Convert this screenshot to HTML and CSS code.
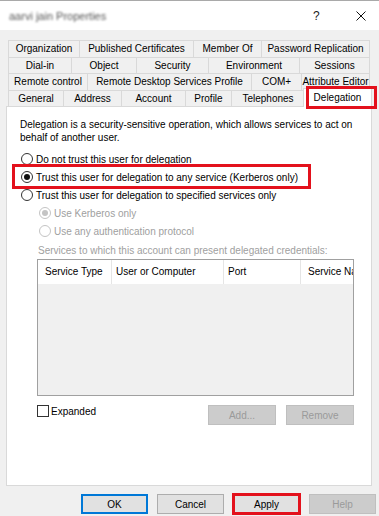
FILE: index.html
```html
<!DOCTYPE html>
<html lang="en">
<head>
  <meta charset="UTF-8" />
  <title>aarvi jain Properties</title>
  <link rel="stylesheet" href="styles.css">
</head>
<body>
  <div class="window">
    <div class="titlebar">
      <span class="title">aarvi jain Properties</span>
      <span class="help-btn">?</span>
      <span class="close-btn">
        <svg width="10" height="10" viewBox="0 0 10 10"><path d="M0.5 0.5L9.5 9.5M9.5 0.5L0.5 9.5" stroke="#111" stroke-width="1" fill="none"/></svg>
      </span>
    </div>

    <div class="content">
      <!-- tab strip, four rows -->
      <div class="tabs">
        <div class="tab-row row-1">
          <div class="tab">Organization</div>
          <div class="tab">Published Certificates</div>
          <div class="tab">Member Of</div>
          <div class="tab">Password Replication</div>
        </div>
        <div class="tab-row row-2">
          <div class="tab">Dial-in</div>
          <div class="tab">Object</div>
          <div class="tab">Security</div>
          <div class="tab">Environment</div>
          <div class="tab">Sessions</div>
        </div>
        <div class="tab-row row-3">
          <div class="tab">Remote control</div>
          <div class="tab">Remote Desktop Services Profile</div>
          <div class="tab">COM+</div>
          <div class="tab">Attribute Editor</div>
        </div>
        <div class="tab-row row-4">
          <div class="tab">General</div>
          <div class="tab">Address</div>
          <div class="tab">Account</div>
          <div class="tab">Profile</div>
          <div class="tab">Telephones</div>
          <div class="tab selected">Delegation</div>
        </div>
      </div>

      <div class="panel">
        <p class="intro">Delegation is a security-sensitive operation, which allows services to act on behalf of another user.</p>

        <div class="options">
          <div class="radio"><span class="dot"></span>Do not trust this user for delegation</div>
          <div class="radio checked marked"><span class="dot"></span>Trust this user for delegation to any service (Kerberos only)</div>
          <div class="radio"><span class="dot"></span>Trust this user for delegation to specified services only</div>
          <div class="radio sub disabled checked"><span class="dot"></span>Use Kerberos only</div>
          <div class="radio sub disabled"><span class="dot"></span>Use any authentication protocol</div>
        </div>

        <div class="services-label">Services to which this account can present delegated credentials:</div>

        <div class="listview">
          <div class="list-head">
            <div class="col col-type">Service Type</div>
            <div class="col col-user">User or Computer</div>
            <div class="col col-port">Port</div>
            <div class="col col-name">Service Na</div>
          </div>
          <div class="list-body"></div>
        </div>

        <div class="list-actions">
          <div class="check"><span class="box"></span>Expanded</div>
          <div class="action-buttons">
            <button class="btn disabled">Add...</button>
            <button class="btn disabled">Remove</button>
          </div>
        </div>
      </div>

      <div class="dialog-buttons">
        <button class="btn default">OK</button>
        <button class="btn">Cancel</button>
        <button class="btn marked-btn">Apply</button>
        <button class="btn disabled">Help</button>
      </div>
    </div>
  </div>
</body>
</html>
```

FILE: styles.css
```css
* {
  box-sizing: border-box;
}
body {
  margin: 0;
  font-family: "Liberation Sans", Arial, sans-serif;
  font-size: 10px;
  color: #000;
  background: #f0f0f0;
}
.window {
  width: 379px;
  height: 516px;
  display: flex;
  flex-direction: column;
  border-top: 1px solid #a9a9a9;
  overflow: hidden;
}
.titlebar {
  height: 29px;
  background: #fff;
  display: flex;
  align-items: center;
  padding: 0 0 0 9px;
}
.title {
  font-size: 11px;
  color: #555;
  filter: blur(1.3px);
  flex: 1;
}
.help-btn {
  font-size: 12px;
  color: #222;
  width: 12px;
  margin-right: 31px;
}
.close-btn {
  width: 10px;
  height: 10px;
  margin-right: 13px;
  display: flex;
}
.content {
  flex: 1;
  padding: 0 7px 0 6px;
  display: flex;
  flex-direction: column;
}
.tabs {
  margin: 10px 2px 0 2px;
}
.tab-row {
  display: grid;
  height: 17px;
}
.tab-row.row-2,
.tab-row.row-4 {
  height: 16px;
}
.row-1 { grid-template-columns: 72px 114px 68px 108px; }
.row-2 { grid-template-columns: 64px 65px 72px 91px 70px; }
.row-3 { grid-template-columns: 80px 164px 50px 68px; }
.row-4 { grid-template-columns: 56px 58px 64px 46px 73px 65px; }
.tab {
  border-top: 1px solid #d9d9d9;
  border-right: 1px solid #d9d9d9;
  background: #f0f0f0;
  text-align: center;
  line-height: 15px;
  white-space: nowrap;
  overflow: hidden;
}
.tab:first-child {
  border-left: 1px solid #d9d9d9;
}
.tab.selected {
  position: relative;
  z-index: 1;
  background: #fff;
  border-left: 1px solid #d9d9d9;
  margin: -2px -2px -1px -2px;
  line-height: 18px;
  overflow: visible;
}
.tab.selected::after {
  content: "";
  position: absolute;
  left: 2px;
  right: -6px;
  top: -3px;
  bottom: -2px;
  border: 3px solid #e3111c;
}
.panel {
  background: #fff;
  border: 1px solid #d9d9d9;
  height: 380px;
  padding: 11px 17px 0 13px;
}
.intro {
  margin: 0;
  line-height: 13px;
  width: 335px;
}
.options {
  margin-top: 6px;
}
.radio {
  height: 18px;
  display: flex;
  align-items: center;
  padding-left: 1px;
  width: fit-content;
  position: relative;
}
.radio .dot {
  width: 12px;
  height: 12px;
  border: 1px solid #333;
  border-radius: 50%;
  margin-right: 3px;
  display: flex;
  align-items: center;
  justify-content: center;
  background: #fff;
}
.radio.checked .dot::before {
  content: "";
  width: 6px;
  height: 6px;
  border-radius: 50%;
  background: #111;
}
.radio.sub {
  padding-left: 19px;
}
.radio.disabled {
  color: #a0a0a0;
}
.radio.disabled .dot {
  border-color: #c4c4c4;
}
.radio.disabled.checked .dot::before {
  background: #c4c4c4;
}
.radio.marked::after {
  content: "";
  position: absolute;
  left: -8px;
  right: -13px;
  top: -4px;
  bottom: -3px;
  border: 3px solid #e3111c;
}
.services-label {
  color: #a0a0a0;
  line-height: 13px;
  margin-top: 4px;
  padding-left: 18px;
}
.listview {
  margin: 2px 0 0 17px;
  border: 1px solid #a0a0a0;
  height: 137px;
  display: flex;
  flex-direction: column;
  overflow: hidden;
}
.list-head {
  height: 24px;
  background: #fff;
  display: grid;
  grid-template-columns: 74px 112px 77px 60px;
}
.col {
  line-height: 24px;
  padding-left: 4px;
  border-right: 1px solid #e5e5e5;
  white-space: nowrap;
  overflow: hidden;
}
.col-type,
.col-name {
  padding-left: 7px;
}
.list-body {
  flex: 1;
  background: #f0f0f0;
}
.list-actions {
  margin: 9px 0 0 17px;
  display: flex;
  align-items: flex-start;
  justify-content: space-between;
}
.check {
  display: flex;
  align-items: center;
  height: 12px;
}
.check .box {
  width: 12px;
  height: 12px;
  border: 1px solid #333;
  background: #fff;
  margin-right: 2px;
}
.action-buttons {
  display: flex;
  gap: 10px;
}
.action-buttons .btn {
  width: 68px;
}
.btn {
  font-family: "Liberation Sans", Arial, sans-serif;
  font-size: 10px;
  width: 67px;
  height: 20px;
  padding: 0;
  background: #e1e1e1;
  border: 1px solid #adadad;
  color: #000;
}
.btn.disabled {
  background: #cccccc;
  border-color: #bfbfbf;
  color: #9a9a9a;
}
.btn.default {
  border-color: #0078d7;
  box-shadow: inset 0 0 0 1px #0078d7;
}
.btn.marked-btn {
  outline: 3px solid #e3111c;
  outline-offset: -2px;
}
.dialog-buttons {
  display: flex;
  justify-content: flex-end;
  gap: 9px;
  margin: 8px -4px 0 0;
}
```
